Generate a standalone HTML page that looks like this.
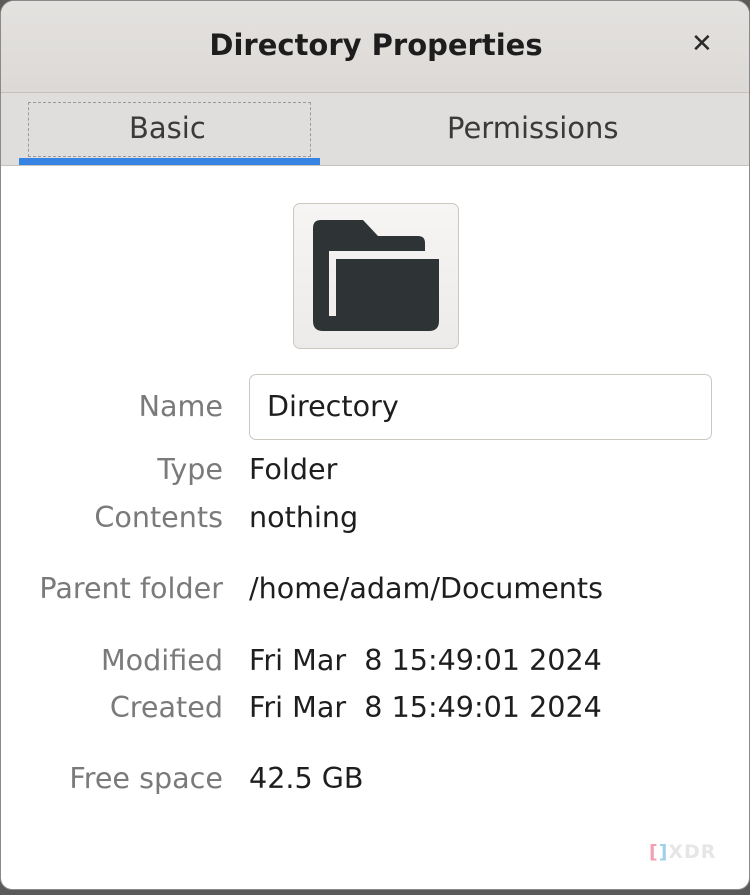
<!DOCTYPE html>
<html><head><style>
body{margin:0;width:750px;height:895px;background:#5a5a5a;overflow:hidden;font-family:"DejaVu Sans","Liberation Sans",sans-serif;}
.win{position:absolute;left:0;top:0;height:890px;background:#fff;border-radius:14px 14px 12px 12px;overflow:hidden;border:1px solid #8a8a8a;box-sizing:border-box;width:750px}
.title{position:absolute;left:0;top:0;width:750px;height:91px;background:linear-gradient(#e4e2e0,#dcd9d6);border-bottom:1px solid #c6c0bb}
.title .t{position:absolute;left:0;width:750px;top:27px;text-align:center;font-weight:bold;font-size:29px;color:#1d1d1d}
.title .x{position:absolute;left:690px;top:28px;font-size:26px;font-weight:bold;color:#2a2a2a}
.tabs{position:absolute;left:0;top:92px;width:750px;height:72px;background:#e0dedc;border-bottom:1px solid #c8c3be}
.tab{position:absolute;top:0;font-size:29px;color:#3a3a3a}
.focus{position:absolute;left:27px;top:9px;width:283px;height:55px;border:1px dashed #9a9a9a;box-sizing:border-box}
.ul{position:absolute;left:18px;top:65px;width:301px;height:7px;background:#3584e4}
.btn{position:absolute;left:292px;top:202px;width:166px;height:146px;border:1px solid #cdc7c2;border-radius:7px;background:linear-gradient(#f6f5f4,#edebe9);box-sizing:border-box}
.l{position:absolute;right:526px;font-size:28.6px;color:#7a7a7a;white-space:nowrap}
.v{position:absolute;left:248px;font-size:28.6px;color:#1e1e1e;white-space:pre}
.entry{position:absolute;left:248px;top:373px;width:463px;height:66px;border:1px solid #cdc7c2;border-radius:7px;box-sizing:border-box}
</style></head><body>
<div class="win">
<div class="title"><div class="t">Directory Properties</div><div class="x">✕</div></div>
<div class="tabs">
<div class="focus"></div>
<div class="tab" style="left:128px;top:18px">Basic</div>
<div class="tab" style="left:446px;top:18px">Permissions</div>
<div class="ul"></div>
</div>
<div class="btn"></div>
<svg style="position:absolute;left:0;top:0" width="750" height="895">
<path fill="#2e3436" d="M320,219 h42 l15,16 h40 q7,0 7,7 v8 H328 V315 H312 V227 q0,-8 8,-8z"/>
<path fill="#2e3436" d="M335,258 H438 V320 q0,10 -10,10 H322 q-10,0 -10,-10 V315 H335 z"/>
</svg>
<div class="l" style="top:388px">Name</div>
<div class="entry"></div>
<div class="v" style="left:266px;top:388px">Directory</div>
<div class="l" style="top:451px">Type</div><div class="v" style="top:451px">Folder</div>
<div class="l" style="top:499px">Contents</div><div class="v" style="top:499px">nothing</div>
<div class="l" style="top:570px">Parent folder</div><div class="v" style="top:570px">/home/adam/Documents</div>
<div class="l" style="top:642px">Modified</div><div class="v" style="top:642px">Fri Mar  8 15:49:01 2024</div>
<div class="l" style="top:689px">Created</div><div class="v" style="top:689px">Fri Mar  8 15:49:01 2024</div>
<div class="l" style="top:760px">Free space</div><div class="v" style="top:760px">42.5 GB</div>
<div style="position:absolute;left:648px;top:840px;font-size:19px;color:#e6e6e6;letter-spacing:1px;font-weight:bold"><span style="color:#f2a0b4">[</span><span style="color:#9fd0ea">]</span>XDR</div>
</div>
</body></html>
